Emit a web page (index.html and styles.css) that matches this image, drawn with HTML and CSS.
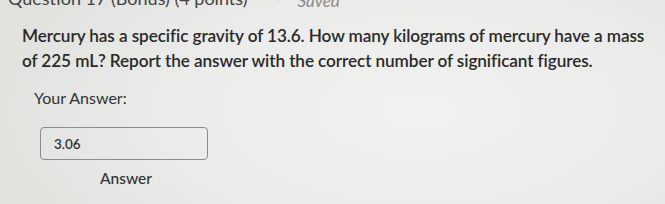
FILE: index.html
```html
<!DOCTYPE html>
<html>
<head>
<meta charset="utf-8">
<link rel="stylesheet" href="styles.css">
</head>
<body>
<div class="page">
  <div class="qhead">
    <span class="qtitle">Question 17 (Bonus) (4 points)</span>
    <span class="saved"><svg class="check" width="15" height="10" viewBox="0 0 15 10"><path d="M1 3 L6 8.5 L14 1" fill="none" stroke="#9a9a9a" stroke-width="1.4"/></svg>Saved</span>
  </div>
  <p class="question">Mercury has a specific gravity of 13.6. How many kilograms of mercury have a mass of 225 mL? Report the answer with the correct number of significant figures.</p>
  <div class="label">Your Answer:</div>
  <div class="answer-box">3.06</div>
  <div class="answer-cap">Answer</div>
</div>
</body>
</html>
```
FILE: styles.css
```css
html, body {
  margin: 0;
  padding: 0;
}
body {
  width: 665px;
  height: 204px;
  overflow: hidden;
  background: radial-gradient(ellipse 420px 200px at 420px 110px, #f1f1ef 0%, #ebebe9 60%, #e2e2df 100%);
  font-family: Lato, "Noto Sans", sans-serif;
  color: #2e2e2e;
}
.page {
  padding: 0 0 0 22px;
}
.qhead {
  margin-top: -13px;
  margin-left: -14px;
  height: 20px;
  display: flex;
  align-items: baseline;
  gap: 24px;
  font-size: 18px;
  color: #444;
  white-space: nowrap;
}
.saved {
  display: flex;
  align-items: center;
  gap: 11px;
  color: #8a8a8a;
  font-style: italic;
  font-size: 17px;
}
.check {
  position: relative;
  top: -4px;
}
.question {
  margin: 16px 0 0 0;
  width: 640px;
  font-size: 17.2px;
  font-weight: 600;
  line-height: 25px;
  letter-spacing: -0.1px;
  color: #2a2a2a;
}
.label {
  margin: 15px 0 0 12px;
  font-size: 16px;
  color: #333;
}
.answer-box {
  margin: 20px 0 0 18px;
  width: 168px;
  height: 33px;
  box-sizing: border-box;
  border: 1.5px solid #8c8c8a;
  border-radius: 4px;
  padding: 0 0 0 13px;
  display: flex;
  align-items: center;
  font-size: 13.5px;
  font-weight: 600;
  color: #333;
}
.answer-cap {
  margin: 9px 0 0 78px;
  font-size: 15.5px;
  font-weight: 500;
  color: #333;
}
```
